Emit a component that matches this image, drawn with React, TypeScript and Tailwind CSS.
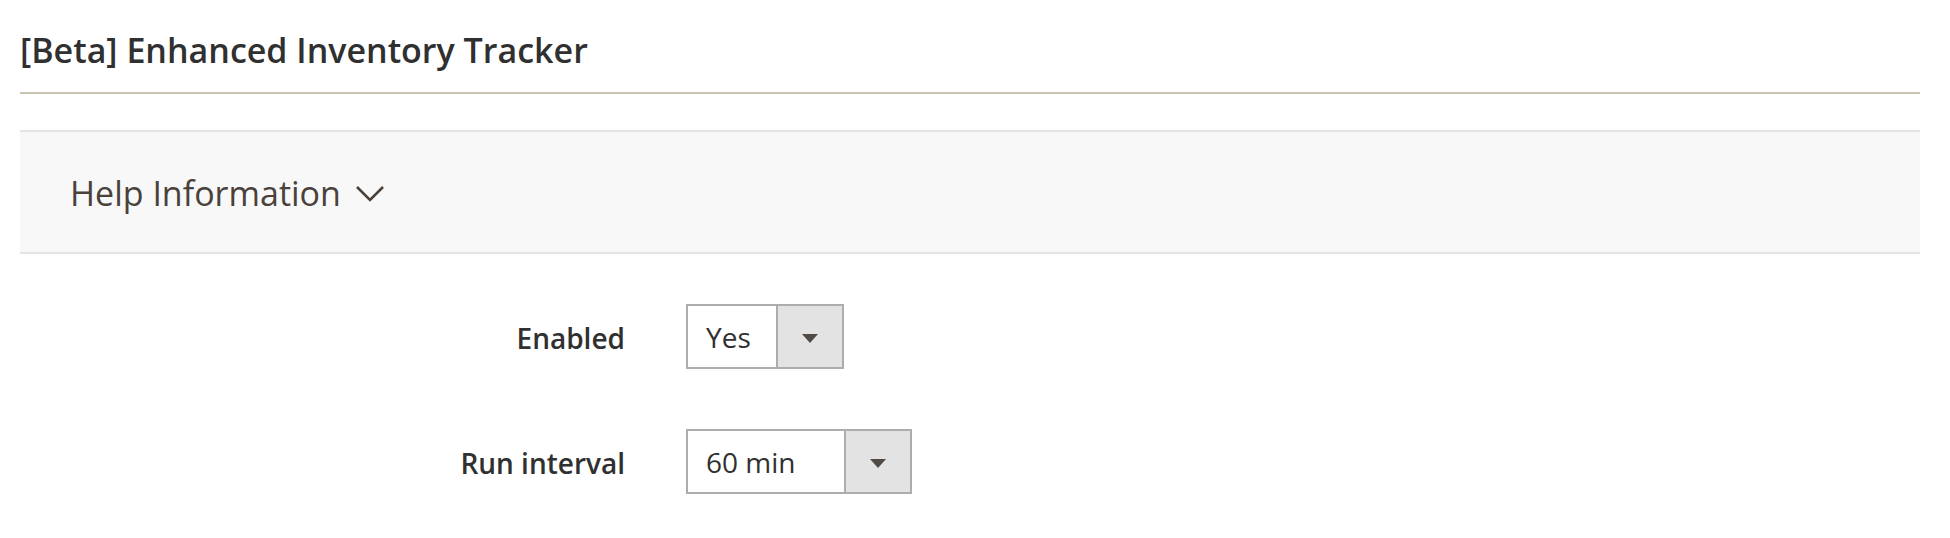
export default function App() {
  const rows = [
    { label: "Enabled", value: "Yes", width: "w-[88px]" },
    { label: "Run interval", value: "60 min", width: "w-[156px]" },
  ];

  return (
    <div className="min-h-screen bg-white pl-5 pr-[30px] font-['Open_Sans',sans-serif] text-[#303030]">
      {/* Section title */}
      <h1 className="border-b-2 border-[#cac3b4] pt-[30px] pb-[22px] text-[34px] font-semibold leading-[40px] text-[#303030]">
        [Beta] Enhanced Inventory Tracker
      </h1>

      {/* Collapsible help block */}
      <div className="mt-9 flex h-[124px] items-center border-y-2 border-[#e3e3e3] bg-[#f8f8f8] pl-[50px]">
        <span className="pt-[2px] text-[34px] leading-[40px] text-[#4a413b]">Help Information</span>
        <svg className="ml-[14px] mt-[2px]" width="30" height="17" viewBox="0 0 30 17" fill="none">
          <path d="M2 2 L15 15 L28 2" stroke="#4a413b" strokeWidth="2.6" />
        </svg>
      </div>

      {/* Form fields */}
      <div className="mt-[50px] flex flex-col gap-[60px]">
        {rows.map((row) => (
          <div key={row.label} className="flex h-[65px] items-start">
            <label className="w-[605px] pt-[3px] text-right text-[28px] font-semibold leading-[62px]">
              {row.label}
            </label>
            <div className="ml-[61px] flex h-[65px] border-2 border-[#adadad] bg-white">
              <span className={`${row.width} pl-[18px] pt-[1px] text-[28px] leading-[60px] text-[#303030]`}>
                {row.value}
              </span>
              <span className="flex w-[66px] items-center justify-center border-l-2 border-[#adadad] bg-[#e3e3e3] pt-[4px]">
                <svg width="16" height="9" viewBox="0 0 16 9">
                  <path d="M0 0 H16 L8 9 Z" fill="#514943" />
                </svg>
              </span>
            </div>
          </div>
        ))}
      </div>
    </div>
  );
}
